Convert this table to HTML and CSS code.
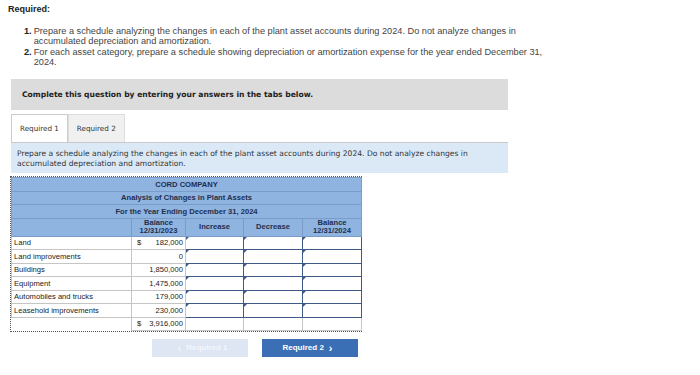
FILE: index.html
```html
<!DOCTYPE html>
<html>
<head>
<meta charset="utf-8">
<link rel="stylesheet" href="styles.css">
</head>
<body>
<div class="page">
  <div class="req-title">Required:</div>
  <ol class="req-list">
    <li><b>1.</b> <span>Prepare a schedule analyzing the changes in each of the plant asset accounts during 2024. Do not analyze changes in accumulated depreciation and amortization.</span></li>
    <li><b>2.</b> <span>For each asset category, prepare a schedule showing depreciation or amortization expense for the year ended December 31, 2024.</span></li>
  </ol>
  <div class="panel">
    <div class="complete">Complete this question by entering your answers in the tabs below.</div>
    <div class="tabs">
      <div class="tab active">Required 1</div>
      <div class="tab">Required 2</div>
    </div>
    <div class="prompt">Prepare a schedule analyzing the changes in each of the plant asset accounts during 2024. Do not analyze changes in accumulated depreciation and amortization.</div>
  </div>
  <div class="sheet">
    <table class="grid">
      <colgroup>
        <col class="c-label"><col class="c-bal"><col class="c-inc"><col class="c-dec"><col class="c-bal2">
      </colgroup>
      <tr class="hd"><td colspan="5">CORD COMPANY</td></tr>
      <tr class="hd"><td colspan="5">Analysis of Changes in Plant Assets</td></tr>
      <tr class="hd"><td colspan="5">For the Year Ending December 31, 2024</td></tr>
      <tr class="hd colh"><td></td><td>Balance<br>12/31/2023</td><td>Increase</td><td>Decrease</td><td>Balance<br>12/31/2024</td></tr>
      <tr><td class="lbl">Land</td><td class="num"><span class="dol">$</span>182,000</td><td class="in"></td><td class="in"></td><td class="in"></td></tr>
      <tr><td class="lbl">Land improvements</td><td class="num">0</td><td class="in"></td><td class="in"></td><td class="in"></td></tr>
      <tr><td class="lbl">Buildings</td><td class="num">1,850,000</td><td class="in"></td><td class="in"></td><td class="in"></td></tr>
      <tr><td class="lbl">Equipment</td><td class="num">1,475,000</td><td class="in"></td><td class="in"></td><td class="in"></td></tr>
      <tr><td class="lbl">Automobiles and trucks</td><td class="num">179,000</td><td class="in"></td><td class="in"></td><td class="in"></td></tr>
      <tr><td class="lbl">Leasehold improvements</td><td class="num">230,000</td><td class="in"></td><td class="in"></td><td class="in"></td></tr>
      <tr class="tot"><td class="blank"></td><td class="num"><span class="dol">$</span>3,916,000</td><td class="plain"></td><td class="plain"></td><td class="plain"></td></tr>
    </table>
  </div>
  <div class="nav">
    <div class="btn prev"><span class="chev">&#8249;</span> Required 1</div>
    <div class="btn next">Required 2 <span class="chev">&#8250;</span></div>
  </div>
</div>
</body>
</html>
```
FILE: styles.css
```css
html, body { margin: 0; padding: 0; background: #fff; }
.page { padding: 3px 8px 0 8px; width: 560px; font-family: "Liberation Sans", Arial, sans-serif; color: #333; }
.req-title { font-size: 9px; font-weight: bold; color: #222; line-height: 12px; }
.req-list { list-style: none; margin: 11px 0 0 16px; padding: 0; width: 528px; font-size: 9.2px; line-height: 10px; color: #444; }
.req-list li { display: flex; gap: 2px; margin-bottom: 1px; }
.req-list li b { color: #222; flex: none; }
.panel { margin: 12px 0 0 3px; width: 497px; }
.complete { background: #dcdcdc; height: 31px; display: flex; align-items: center; padding-left: 11px; font-family: "DejaVu Sans", Verdana, sans-serif; font-size: 7.6px; font-weight: bold; color: #222; }
.tabs { display: flex; margin-top: 4px; height: 28px; border-bottom: 1px solid #c9c9c9; }
.tab { font-family: "DejaVu Sans", Verdana, sans-serif; font-size: 7.2px; color: #333; padding: 0 8px; display: flex; align-items: center; background: #f0f0f0; border: 1px solid #ddd; border-bottom: none; }
.tab.active { background: #fff; border-color: #ccc; }
.prompt { background: #dbe9f7; padding: 6px 36px 5px 6px; font-family: "DejaVu Sans", Verdana, sans-serif; font-size: 7.6px; line-height: 9.5px; color: #333; height: 19px; }
.sheet { margin: 3px 0 0 2px; width: 350px; border: 1px dotted #555; }
.grid { border-collapse: collapse; width: 100%; table-layout: fixed; font-family: "Liberation Sans", Arial, sans-serif; font-size: 7.6px; color: #222; }
.c-label { width: 120px; } .c-bal { width: 54px; } .c-inc { width: 58px; } .c-dec { width: 59px; } .c-bal2 { width: 59px; }
.grid td { padding: 0 2px; height: 12.5px; border: 1px solid #c5c5c5; white-space: nowrap; }
.hd td { background: #8fb4e0; text-align: center; font-weight: bold; color: #1f2f4f; border: 1px solid #7a9cc8; }
.colh td { height: 17px; line-height: 8.5px; }
.lbl { text-align: left; }
.num { text-align: right; }
.dol { float: left; padding-left: 3px; }
.in { border: 1.5px solid #3f5a86 !important; position: relative; }
.in::before { content: ""; position: absolute; left: 0; top: 0; border-left: 3px solid #3f5a86; border-bottom: 3px solid transparent; }
.tot td { height: 12px; }
.blank { border: none !important; }
.plain { border: 1px solid #c5c5c5; }
.nav { display: flex; gap: 14px; margin: 7px 0 0 144px; }
.btn { width: 96px; height: 18px; display: flex; align-items: center; justify-content: center; font-size: 8px; font-weight: bold; color: #fff; }
.prev { background: #dde6f2; color: #f3f6fb; }
.next { background: #3a6fb5; }
.chev { font-size: 11px; margin: 0 5px; font-weight: bold; }
```
